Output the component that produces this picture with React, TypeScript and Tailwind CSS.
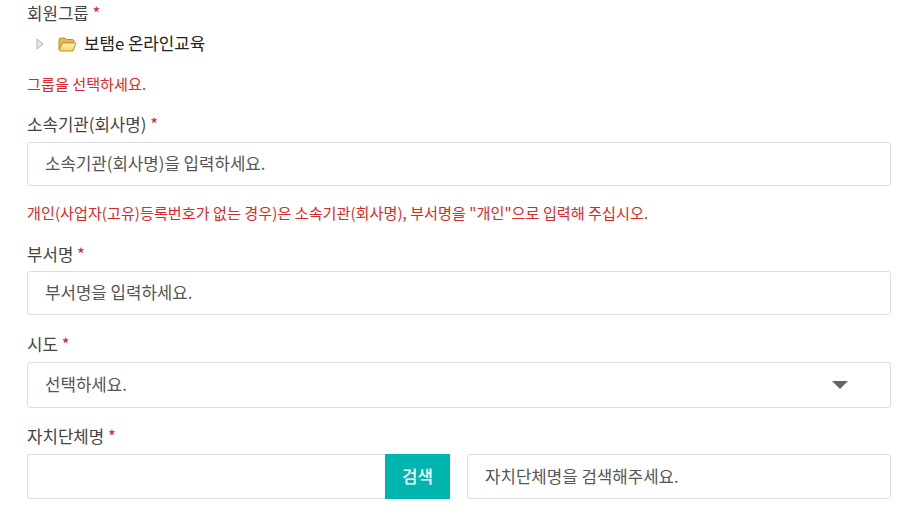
import React from "react";

const Label = ({ children }: { children: React.ReactNode }) => (
  <div className="h-6 text-[16.8px] leading-6 text-[#444]">
    {children} <span className="text-[#db2828]">*</span>
  </div>
);

const Note = ({ children }: { children: React.ReactNode }) => (
  <p className="text-[15.17px] leading-5 text-[#db2828]">{children}</p>
);

const boxClass =
  "flex items-center rounded-[3px] border border-[#ddd] bg-white px-[17px] text-[16.8px] text-[#555]";

const FolderIcon = () => (
  <svg width="19" height="15" viewBox="0 0 19 15" className="block">
    <defs>
      <linearGradient id="folderFront" x1="0" y1="0" x2="0" y2="1">
        <stop offset="0" stopColor="#fff3b0" />
        <stop offset="1" stopColor="#f5cf63" />
      </linearGradient>
    </defs>
    <path d="M1 3 Q1 1 3 1 H7 L8.500 2.500 H14.500 Q16 2.500 16 4 V6 H5 L1 13 Z" fill="#e3b94f" stroke="#b98f2c" />
    <path d="M4.500 6 H18 L15 14 H2.500 Q1 14 1.500 12.500 Z" fill="url(#folderFront)" stroke="#c0982f" />
  </svg>
);

export default function App() {
  return (
    <div className="w-[916px] h-[516px] overflow-hidden bg-white pl-[27px] pr-[25px] font-['Noto_Sans_CJK_KR',sans-serif]">
      <div className="pt-[1px]">
        <Label>회원그룹</Label>
      </div>
      <div className="mt-[7px] flex h-6 items-center pl-[9px]">
        <svg width="8" height="12" viewBox="0 0 8 12">
          <path d="M1 1 L7 6 L1 11 Z" fill="#e8e8e8" stroke="#b5b5b5" />
        </svg>
        <span className="ml-[14px]">
          <FolderIcon />
        </span>
        <span className="ml-[7px] text-[16.8px] text-[#222]">보탬e 온라인교육</span>
      </div>
      <div className="mt-[17px]">
        <Note>그룹을 선택하세요.</Note>
      </div>
      <div className="mt-[19px]">
        <Label>소속기관(회사명)</Label>
      </div>
      <div className={`${boxClass} mt-[6px] h-[44px]`}>소속기관(회사명)을 입력하세요.</div>
      <div className="mt-[16px]">
        <Note>개인(사업자(고유)등록번호가 없는 경우)은 소속기관(회사명), 부서명을 "개인"으로 입력해 주십시오.</Note>
      </div>
      <div className="mt-[20px]">
        <Label>부서명</Label>
      </div>
      <div className={`${boxClass} mt-[5px] h-[44px]`}>부서명을 입력하세요.</div>
      <div className="mt-[17px]">
        <Label>시도</Label>
      </div>
      <div className={`${boxClass} mt-[6px] h-[46px] justify-between pr-[42px] text-[#222]`}>
        <span>선택하세요.</span>
        <svg width="16" height="8" viewBox="0 0 16 8">
          <path d="M0 0 H16 L8 8 Z" fill="#666" />
        </svg>
      </div>
      <div className="mt-[16px]">
        <Label>자치단체명</Label>
      </div>
      <div className="mt-[6px] flex h-[45px]">
        <div className="w-[358px] rounded-l-[3px] border border-r-0 border-[#ddd] bg-white" />
        <div className="flex w-[65px] items-center justify-center bg-[#00b5ad] text-[16.8px] font-medium text-white">
          검색
        </div>
        <div className={`${boxClass} ml-[17px] flex-1`}>자치단체명을 검색해주세요.</div>
      </div>
    </div>
  );
}
